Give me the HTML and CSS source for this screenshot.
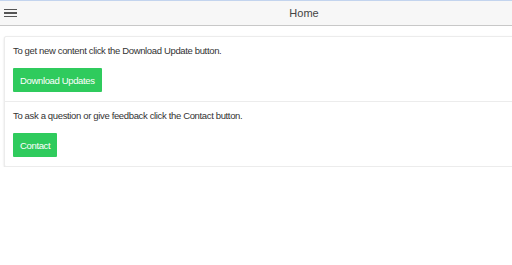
FILE: index.html
```html
<!DOCTYPE html>
<html lang="en">
<head>
  <link rel="stylesheet" href="styles.css">
</head>
<body>
  <div class="app">
    <div class="header">
      <div class="menu-btn">
        <span></span>
        <span></span>
        <span></span>
      </div>
      <div class="title">Home</div>
    </div>

    <!-- Tarjeta con las dos secciones -->
    <div class="card">
      <div class="section">
        <p>To get new content click the Download Update button.</p>
        <button class="button">Download Updates</button>
      </div>
      <div class="section">
        <p>To ask a question or give feedback click the Contact button.</p>
        <button class="button">Contact</button>
      </div>
    </div>
  </div>
</body>
</html>
```

FILE: styles.css
```css
html,
body {
  margin: 0;
  padding: 0;
  overflow: hidden;
  background-color: #fff;
}
.app {
  width: 608px;
  font-family: "Liberation Sans", Arial, sans-serif;
  color: #333;
}
.header {
  display: flex;
  align-items: center;
  height: 24px;
  background-color: #f7f7f7;
  border-top: 1px solid #c3d4ee;
  border-bottom: 1px solid #c8c8c8;
}
.menu-btn {
  display: flex;
  flex-direction: column;
  gap: 2px;
  margin-left: 4px;
  width: 13px;
}
.menu-btn span {
  display: block;
  height: 1.5px;
  background-color: #555;
}
.title {
  flex: 1;
  text-align: center;
  font-size: 11px;
  color: #444;
  margin-right: 17px;
}
.card {
  margin: 10px 0 0 4px;
  background-color: #fff;
  border: 1px solid #ececec;
  border-radius: 2px;
  box-shadow: 0px 1px 2px rgba(0, 0, 0, 0.15);
}
.section {
  padding: 7px 8px 9px 8px;
}
.section + .section {
  border-top: 1px solid #ececec;
}
.section p {
  margin: 0 0 11px 0;
  font-size: 9.5px;
  letter-spacing: -0.35px;
  line-height: 13px;
}
.button {
  display: block;
  background-color: #2fcb5d;
  border: none;
  border-radius: 1px;
  color: #fff;
  font-family: "Liberation Sans", Arial, sans-serif;
  font-size: 9.5px;
  letter-spacing: -0.35px;
  height: 24px;
  padding: 0 7px;
  cursor: pointer;
}
```
